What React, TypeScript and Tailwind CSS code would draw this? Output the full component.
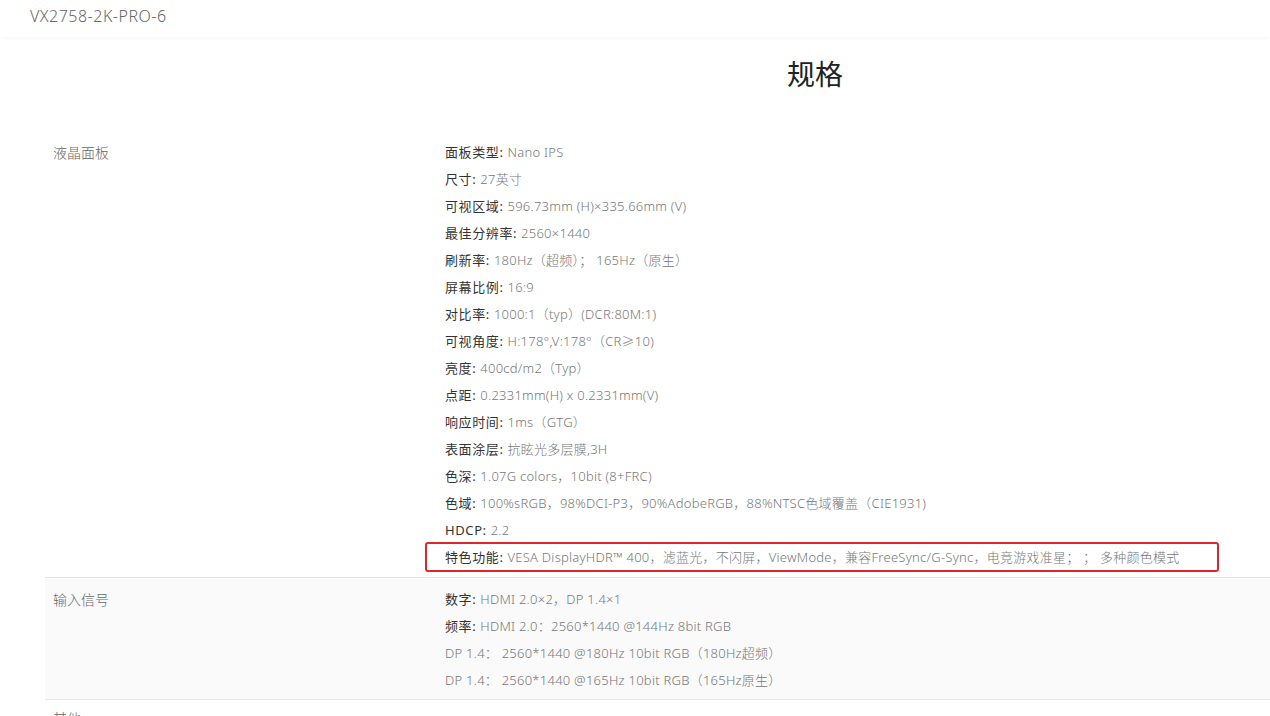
import React from "react";

const font = { fontFamily: '"Noto Sans", "Noto Sans CJK SC", sans-serif' };

type Item = { k?: string; v: string; hl?: boolean };

const panel: Item[] = [
  { k: "面板类型", v: "Nano IPS" },
  { k: "尺寸", v: "27英寸" },
  { k: "可视区域", v: "596.73mm (H)×335.66mm (V)" },
  { k: "最佳分辨率", v: "2560×1440" },
  { k: "刷新率", v: "180Hz（超频）； 165Hz（原生）" },
  { k: "屏幕比例", v: "16:9" },
  { k: "对比率", v: "1000:1（typ）(DCR:80M:1)" },
  { k: "可视角度", v: "H:178°,V:178°（CR≥10)" },
  { k: "亮度", v: "400cd/m2（Typ）" },
  { k: "点距", v: "0.2331mm(H) x 0.2331mm(V)" },
  { k: "响应时间", v: "1ms（GTG）" },
  { k: "表面涂层", v: "抗眩光多层膜,3H" },
  { k: "色深", v: "1.07G colors，10bit (8+FRC)" },
  { k: "色域", v: "100%sRGB，98%DCI-P3，90%AdobeRGB，88%NTSC色域覆盖（CIE1931)" },
  { k: "HDCP", v: "2.2" },
  {
    k: "特色功能",
    v: "VESA DisplayHDR™ 400，滤蓝光，不闪屏，ViewMode，兼容FreeSync/G-Sync，电竞游戏准星； ； 多种颜色模式",
    hl: true,
  },
];

const input: Item[] = [
  { k: "数字", v: "HDMI 2.0×2，DP 1.4×1" },
  { k: "频率", v: "HDMI 2.0：2560*1440 @144Hz 8bit RGB" },
  { v: "DP 1.4： 2560*1440 @180Hz 10bit RGB（180Hz超频）" },
  { v: "DP 1.4： 2560*1440 @165Hz 10bit RGB（165Hz原生）" },
];

function Line({ it }: { it: Item }) {
  return (
    <div className="relative h-[27px] leading-[27px] text-[13px] whitespace-pre">
      {it.k && <span className="text-[#333] tracking-[0.6px]">{it.k}: </span>}
      <span className="text-[#777] font-light tracking-[0.25px]">{it.v}</span>
      {it.hl && (
        <span className="pointer-events-none absolute left-[-20px] top-[-2.5px] h-[30px] w-[794px] rounded-[3px] border-2 border-[#e0262b]" />
      )}
    </div>
  );
}

function Row({ label, items, bg, pt, pb }: { label: string; items: Item[]; bg?: boolean; pt: string; pb: string }) {
  return (
    <div className={`flex border-b border-[#e6e6e6] ${bg ? "bg-[#fafafa]" : "bg-white"} ${pt} ${pb}`}>
      <div className="w-[400px] pl-[8px] text-[14px] leading-[27px] text-[#666] font-light">{label}</div>
      <div className="flex flex-col">
        {items.map((it, i) => (
          <Line key={i} it={it} />
        ))}
      </div>
    </div>
  );
}

export default function App() {
  return (
    <div className="w-[1270px] h-[716px] overflow-hidden bg-white" style={font}>
      <div className="h-[37px] pl-[30px] pt-[4px] text-[16px] leading-[24px] tracking-[0.5px] text-[#666] font-light shadow-[0_2px_4px_rgba(0,0,0,0.03)]">
        VX2758-2K-PRO-6
      </div>
      <div className="ml-[45px]">
        <div className="h-[102px] pt-[19px] pl-[742px] text-[28px] leading-[36px] text-[#222]">规格</div>
        <Row label="液晶面板" items={panel} pt="pt-0" pb="pb-[6px]" />
        <Row label="输入信号" items={input} bg pt="pt-[8px]" pb="pb-[5px]" />
        <div className="pt-[5px] pl-[8px] text-[14px] leading-[27px] text-[#666] font-light">其他</div>
      </div>
    </div>
  );
}
